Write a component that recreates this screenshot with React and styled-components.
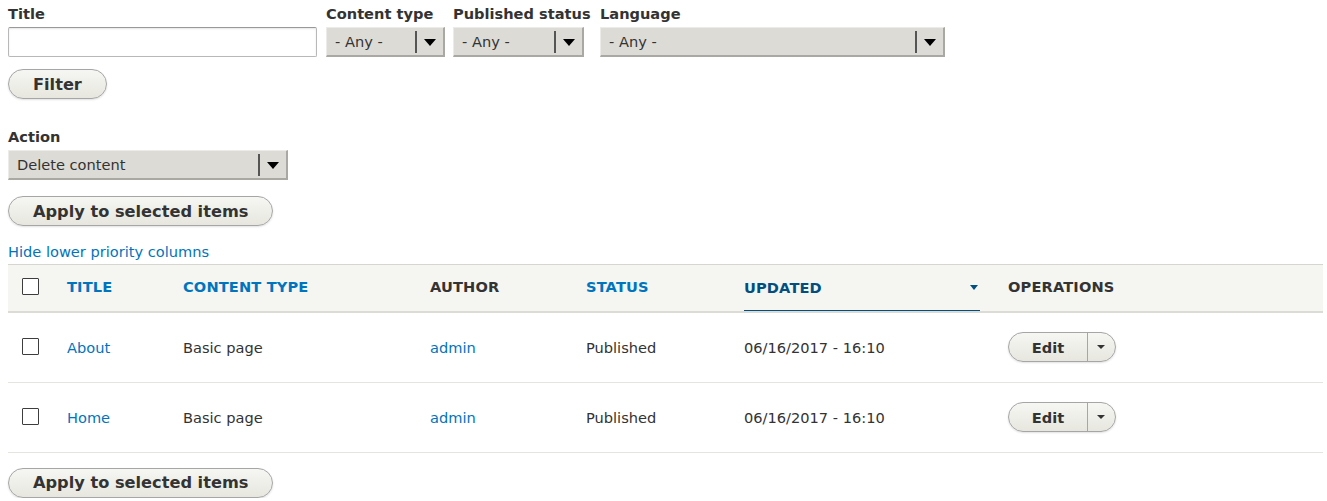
import React from "react";
import styled, { createGlobalStyle } from "styled-components";

const GlobalStyle = createGlobalStyle`
  body {
    margin: 0;
    background: #fff;
    font-family: "DejaVu Sans", "Liberation Sans", sans-serif;
    color: #333;
  }
`;

const Page = styled.div`
  padding: 5px 4px 0 8px;
`;

const FilterRow = styled.div`
  display: flex;
  gap: 9px;
  align-items: flex-start;
`;

const FormItem = styled.div`
  display: flex;
  flex-direction: column;
  width: ${(p) => (p.width ? `${p.width}px` : "auto")};
  margin-top: ${(p) => p.mt || 0}px;
`;

const Label = styled.label`
  font-size: 14.6px;
  font-weight: bold;
  line-height: 17px;
  height: 17px;
  margin-bottom: 5px;
  white-space: nowrap;
`;

const TextInput = styled.input`
  box-sizing: border-box;
  width: 309px;
  height: 30px;
  border: 1px solid #b8b8b8;
  border-top-color: #999;
  border-radius: 2px;
  box-shadow: inset 0 1px 2px rgba(0, 0, 0, 0.1);
  background: #fff;
  margin: 0;
`;

const SelectBox = styled.div`
  box-sizing: border-box;
  width: ${(p) => p.width}px;
  height: 30px;
  display: flex;
  align-items: center;
  background: #dcdbd5;
  border: 1px solid #c8c7c2;
  border-top-color: #ecebe7;
  border-left-color: #ecebe7;
  border-bottom: 2px solid #a9a8a3;
  border-right: 2px solid #a9a8a3;
  font-size: 14.6px;
  color: #333;
`;

const SelectText = styled.span`
  flex: 1;
  padding-left: 8px;
  white-space: nowrap;
`;

const SelectArrow = styled.span`
  width: 26px;
  align-self: stretch;
  display: flex;
  align-items: center;
  justify-content: center;
  margin: 3px 0 2px;
  border-left: 2px solid #555;

  &::after {
    content: "";
    border-left: 6px solid transparent;
    border-right: 6px solid transparent;
    border-top: 7px solid #000;
  }
`;

const ButtonRow = styled.div`
  margin-top: ${(p) => p.mt || 0}px;
`;

const Button = styled.button`
  box-sizing: border-box;
  height: 30px;
  padding: 0 ${(p) => p.px || 24}px;
  border: 1px solid #a6a6a6;
  border-radius: 20em;
  background: linear-gradient(to bottom, #f6f6f3, #e7e7df);
  box-shadow: 0 1px 2px rgba(0, 0, 0, 0.12);
  font-family: inherit;
  font-size: 16.2px;
  font-weight: bold;
  color: #333;
  cursor: pointer;
  margin: 0;
`;

const Link = styled.a`
  color: #0074bd;
  text-decoration: none;
  font-size: 14.6px;
`;

const HideLink = styled(Link)`
  display: block;
  line-height: 18px;
  margin: 17px 0 3px;
`;

const Table = styled.table`
  width: 100%;
  border-collapse: collapse;
  table-layout: fixed;
`;

const HeadRow = styled.tr`
  background: #f5f5f2;
  border-top: 1px solid #d6d5cf;
  border-bottom: 2px solid #dcdbd5;
`;

const Th = styled.th`
  height: 47px;
  box-sizing: border-box;
  padding: 0 ${(p) => p.pr ?? 12}px 2px ${(p) => p.pl ?? 12}px;
  text-align: left;
  font-size: 14.6px;
  font-weight: bold;
  text-transform: uppercase;
  letter-spacing: 0.01em;
  color: ${(p) => (p.link ? "#0074bd" : "#333")};
  vertical-align: middle;
`;

const SortLink = styled.span`
  display: flex;
  align-items: center;
  justify-content: space-between;
  height: 47px;
  box-sizing: border-box;
  color: #004f80;
  border-bottom: 2px solid #004f80;
  margin-bottom: -4px;

  &::after {
    content: "";
    margin-right: 2px;
    border-left: 4px solid transparent;
    border-right: 4px solid transparent;
    border-top: 5px solid #004f80;
  }
`;

const Row = styled.tr`
  border-bottom: 1px solid #e6e4df;
`;

const Td = styled.td`
  height: 69px;
  padding: 0 12px 0 ${(p) => p.pl ?? 12}px;
  font-size: 14.6px;
  color: #333;
  vertical-align: middle;
  white-space: nowrap;
`;

const Check = styled.span`
  display: inline-block;
  box-sizing: border-box;
  width: 17px;
  height: 17px;
  border: 1.5px solid #3d3d3d;
  border-radius: 1px;
  background: #fff;
  vertical-align: middle;
  margin-top: -4px;
`;

const SplitButton = styled.div`
  display: inline-flex;
  box-sizing: border-box;
  height: 30px;
  width: 108px;
  border: 1px solid #a6a6a6;
  border-radius: 20em;
  background: linear-gradient(to bottom, #f6f6f3, #e7e7df);
  box-shadow: 0 1px 2px rgba(0, 0, 0, 0.12);
  overflow: hidden;
`;

const SplitMain = styled.span`
  width: 78px;
  display: flex;
  align-items: center;
  justify-content: center;
  font-weight: bold;
  font-size: 14.6px;
  color: #333;
  border-right: 1px solid #a6a6a6;
`;

const SplitToggle = styled.span`
  flex: 1;
  display: flex;
  align-items: center;
  justify-content: center;

  &::after {
    content: "";
    margin-right: 2px;
    border-left: 4px solid transparent;
    border-right: 4px solid transparent;
    border-top: 4px solid #333;
  }
`;

const rows = [
  { title: "About", type: "Basic page", author: "admin", status: "Published", updated: "06/16/2017 - 16:10" },
  { title: "Home", type: "Basic page", author: "admin", status: "Published", updated: "06/16/2017 - 16:10" },
];

const Select = ({ width, value }) => (
  <SelectBox width={width}>
    <SelectText>{value}</SelectText>
    <SelectArrow />
  </SelectBox>
);

const App = () => {
  return (
    <Page>
      <GlobalStyle />
      <FilterRow>
        <FormItem width={309}>
          <Label>Title</Label>
          <TextInput type="text" />
        </FormItem>
        <FormItem width={118}>
          <Label>Content type</Label>
          <Select width={119} value="- Any -" />
        </FormItem>
        <FormItem width={138}>
          <Label>Published status</Label>
          <Select width={131} value="- Any -" />
        </FormItem>
        <FormItem width={345}>
          <Label>Language</Label>
          <Select width={345} value="- Any -" />
        </FormItem>
      </FilterRow>

      <ButtonRow mt={12}>
        <Button>Filter</Button>
      </ButtonRow>

      <FormItem mt={29}>
        <Label>Action</Label>
        <Select width={280} value="Delete content" />
      </FormItem>
      <ButtonRow mt={16}>
        <Button>Apply to selected items</Button>
      </ButtonRow>

      <HideLink href="#">Hide lower priority columns</HideLink>

      <Table>
        <colgroup>
          <col style={{ width: 47 }} />
          <col style={{ width: 116 }} />
          <col style={{ width: 247 }} />
          <col style={{ width: 156 }} />
          <col style={{ width: 158 }} />
          <col style={{ width: 264 }} />
          <col />
        </colgroup>
        <thead>
          <HeadRow>
            <Th pl={14}>
              <Check />
            </Th>
            <Th link>Title</Th>
            <Th link>Content type</Th>
            <Th>Author</Th>
            <Th link>Status</Th>
            <Th link pr={16}>
              <SortLink>Updated</SortLink>
            </Th>
            <Th>Operations</Th>
          </HeadRow>
        </thead>
        <tbody>
          {rows.map((r) => (
            <Row key={r.title}>
              <Td pl={14}>
                <Check />
              </Td>
              <Td>
                <Link href="#">{r.title}</Link>
              </Td>
              <Td>{r.type}</Td>
              <Td>
                <Link href="#">{r.author}</Link>
              </Td>
              <Td>{r.status}</Td>
              <Td>{r.updated}</Td>
              <Td>
                <SplitButton>
                  <SplitMain>Edit</SplitMain>
                  <SplitToggle />
                </SplitButton>
              </Td>
            </Row>
          ))}
        </tbody>
      </Table>

      <ButtonRow mt={15}>
        <Button>Apply to selected items</Button>
      </ButtonRow>
    </Page>
  );
};

export default App;
